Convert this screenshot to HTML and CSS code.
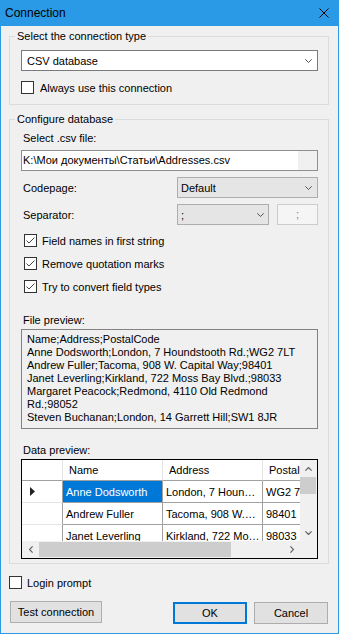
FILE: index.html
```html
<!DOCTYPE html>
<html>
<head>
<meta charset="utf-8">
<title>Connection</title>
<link rel="stylesheet" href="styles.css">
</head>
<body>
<div class="window">
  <div class="titlebar">
    <span class="title">Connection</span>
    <svg class="close" width="10" height="10" viewBox="0 0 10 10"><path d="M0.5 0.5L9.5 9.5M9.5 0.5L0.5 9.5" stroke="#000" stroke-width="1" fill="none"/></svg>
  </div>
  <div class="content">
    <fieldset class="group g1">
      <legend>Select the connection type</legend>
      <div class="gbody">
        <div class="combo combo-white">
          <span class="combo-text">CSV database</span>
          <svg class="chev" width="7" height="4" viewBox="0 0 7 4"><path d="M0.3 0.3L3.5 3.5L6.7 0.3" stroke="#555" stroke-width="1" fill="none"/></svg>
        </div>
        <div class="check check-always">
          <span class="box"></span>
          <span class="ctext">Always use this connection</span>
        </div>
      </div>
    </fieldset>

    <fieldset class="group g2">
      <legend>Configure database</legend>
      <div class="gbody">
        <div class="lbl lbl-file">Select .csv file:</div>
        <div class="path">
          <span class="path-text">K:\Мои документы\Статьи\Addresses.csv</span>
          <span class="path-side"></span>
        </div>
        <div class="frow">
          <span class="lbl">Codepage:</span>
          <div class="combo combo-gray combo-cp">
            <span class="combo-text">Default</span>
            <svg class="chev" width="7" height="4" viewBox="0 0 7 4"><path d="M0.3 0.3L3.5 3.5L6.7 0.3" stroke="#555" stroke-width="1" fill="none"/></svg>
          </div>
        </div>
        <div class="frow">
          <span class="lbl">Separator:</span>
          <div class="sep-wrap">
            <div class="combo combo-gray combo-sep">
              <span class="combo-text">;</span>
              <svg class="chev" width="7" height="4" viewBox="0 0 7 4"><path d="M0.3 0.3L3.5 3.5L6.7 0.3" stroke="#555" stroke-width="1" fill="none"/></svg>
            </div>
            <div class="sep-btn">;</div>
          </div>
        </div>
        <div class="checks">
          <div class="check">
            <span class="box"><svg width="11" height="11" viewBox="0 0 11 11"><path d="M1.5 5.5L4 8L9.5 2.5" stroke="#444" stroke-width="1" fill="none"/></svg></span>
            <span class="ctext">Field names in first string</span>
          </div>
          <div class="check">
            <span class="box"><svg width="11" height="11" viewBox="0 0 11 11"><path d="M1.5 5.5L4 8L9.5 2.5" stroke="#444" stroke-width="1" fill="none"/></svg></span>
            <span class="ctext">Remove quotation marks</span>
          </div>
          <div class="check">
            <span class="box"><svg width="11" height="11" viewBox="0 0 11 11"><path d="M1.5 5.5L4 8L9.5 2.5" stroke="#444" stroke-width="1" fill="none"/></svg></span>
            <span class="ctext">Try to convert field types</span>
          </div>
        </div>
        <div class="lbl lbl-sect lbl-fp">File preview:</div>
        <div class="preview">
          <div>Name;Address;PostalCode</div>
          <div>Anne Dodsworth;London, 7 Houndstooth Rd.;WG2 7LT</div>
          <div>Andrew Fuller;Tacoma, 908 W. Capital Way;98401</div>
          <div>Janet Leverling;Kirkland, 722 Moss Bay Blvd.;98033</div>
          <div>Margaret Peacock;Redmond, 4110 Old Redmond</div>
          <div>Rd.;98052</div>
          <div>Steven Buchanan;London, 14 Garrett Hill;SW1 8JR</div>
        </div>
        <div class="lbl lbl-sect">Data preview:</div>
        <div class="grid">
          <div class="gview">
            <div class="grow ghead">
              <div class="gc rh"></div>
              <div class="gc c1">Name</div>
              <div class="gc c2">Address</div>
              <div class="gc c3">PostalCode</div>
            </div>
            <div class="grow">
              <div class="gc rh"><svg width="5" height="9" viewBox="0 0 5 9"><path d="M0 0L5 4.5L0 9Z" fill="#222"/></svg></div>
              <div class="gc c1 sel">Anne Dodsworth</div>
              <div class="gc c2">London, 7 Houn…</div>
              <div class="gc c3">WG2 7LT</div>
            </div>
            <div class="grow">
              <div class="gc rh"></div>
              <div class="gc c1">Andrew Fuller</div>
              <div class="gc c2">Tacoma, 908 W.…</div>
              <div class="gc c3">98401</div>
            </div>
            <div class="grow">
              <div class="gc rh"></div>
              <div class="gc c1">Janet Leverling</div>
              <div class="gc c2">Kirkland, 722 Mo…</div>
              <div class="gc c3">98033</div>
            </div>
          </div>
          <div class="vscroll">
            <div class="sarrow"><svg width="7" height="4" viewBox="0 0 7 4"><path d="M0.4 3.6L3.5 0.5L6.6 3.6" stroke="#606060" stroke-width="1.2" fill="none"/></svg></div>
            <div class="vthumb"></div>
            <div class="vtrack"></div>
            <div class="sarrow"><svg width="7" height="4" viewBox="0 0 7 4"><path d="M0.4 0.4L3.5 3.5L6.6 0.4" stroke="#606060" stroke-width="1.2" fill="none"/></svg></div>
          </div>
          <div class="hscroll">
            <div class="sarrow"><svg width="4" height="7" viewBox="0 0 4 7"><path d="M3.6 0.4L0.5 3.5L3.6 6.6" stroke="#606060" stroke-width="1.2" fill="none"/></svg></div>
            <div class="hthumb"></div>
            <div class="htrack"></div>
            <div class="sarrow"><svg width="4" height="7" viewBox="0 0 4 7"><path d="M0.4 0.4L3.5 3.5L0.4 6.6" stroke="#606060" stroke-width="1.2" fill="none"/></svg></div>
          </div>
          <div class="corner"></div>
        </div>
      </div>
    </fieldset>

    <div class="check check-login">
      <span class="box"></span>
      <span class="ctext">Login prompt</span>
    </div>

    <div class="buttons">
      <div class="btn btn-test">Test connection</div>
      <div class="btn-right">
        <div class="btn btn-ok">OK</div>
        <div class="btn btn-cancel">Cancel</div>
      </div>
    </div>
  </div>
</div>
</body>
</html>
```

FILE: styles.css
```css
* { box-sizing: border-box; }
html, body { margin: 0; padding: 0; }
body {
  width: 339px;
  height: 634px;
  overflow: hidden;
  background: #f0f0f0;
  color: #000;
  font-family: "Liberation Sans", Arial, sans-serif;
  font-size: 11px;
}
.window {
  width: 339px;
  height: 634px;
  display: flex;
  flex-direction: column;
}
.titlebar {
  flex: none;
  height: 26px;
  background: #2b9ae6;
  display: flex;
  align-items: center;
  justify-content: space-between;
  padding: 0 10px 0 5px;
}
.title { font-size: 12px; line-height: 16px; }
.close { display: block; }

.content {
  flex: 1;
  border: 1px solid #2b9ae6;
  border-top: 0;
  padding: 0 9px 0 8px;
  background: #f0f0f0;
}

.group {
  margin: 0;
  padding: 0;
  min-width: 0;
  border: 1px solid #dcdcdc;
}
.group legend {
  margin-left: 5px;
  padding: 0 2px;
  line-height: 16px;
  font-size: 11px;
}
.g1 { margin-top: 2px; }
.g2 { margin-top: 6px; }
.g1 .gbody { padding: 6px 10px 10px 11px; }
.g2 .gbody { padding: 0 10px 4px 11px; }

.combo {
  height: 21px;
  display: flex;
  align-items: center;
  justify-content: space-between;
  padding: 0 5px 0 5px;
  line-height: 16px;
}
.combo-white { background: #fff; border: 1px solid #7a7a7a; }
.combo-gray { background: #e5e5e5; border: 1px solid #adadad; padding-left: 3px; }
.chev { display: block; flex: none; }

.check {
  display: flex;
  align-items: center;
  line-height: 16px;
}
.box {
  width: 13px;
  height: 13px;
  flex: none;
  border: 1px solid #333;
  background: #fff;
  display: flex;
  align-items: center;
  justify-content: center;
}
.box svg { display: block; }
.ctext { margin-left: 5px; }
.check-always { margin-top: 10px; height: 13px; }
.check-always .ctext { margin-left: 6px; }

.lbl { line-height: 16px; padding-left: 2px; }
.lbl-file { margin-top: 3px; }
.path {
  margin-top: 4px;
  height: 21px;
  border: 1px solid #8f8f8f;
  display: flex;
  background: #fff;
}
.path-text {
  flex: 1;
  padding-left: 1px;
  line-height: 19px;
  white-space: nowrap;
  overflow: hidden;
}
.path-side { width: 19px; flex: none; background: #f0f0f0; }

.frow {
  margin-top: 6px;
  display: flex;
  align-items: center;
  justify-content: space-between;
}
.combo-cp { width: 141px; }
.sep-wrap { width: 141px; display: flex; gap: 8px; }
.combo-sep { width: 92px; padding-right: 4px; }
.sep-btn {
  flex: 1;
  height: 21px;
  border: 1px solid #cccccc;
  background: #f5f5f5;
  color: #838383;
  text-align: center;
  line-height: 19px;
}

.checks { margin-top: 4px; padding-left: 3px; }
.checks .check { height: 23px; }

.lbl-sect { margin-top: 13px; }
.lbl-fp { margin-top: 14px; }
.preview {
  margin-top: 1px;
  height: 100px;
  border: 1px solid #828282;
  background: #f0f0f0;
  padding: 3px 5px 0 5px;
  line-height: 13px;
  white-space: nowrap;
  overflow: hidden;
}

.grid {
  margin-top: 1px;
  height: 100px;
  border: 1px solid #000;
  display: grid;
  grid-template-columns: 1fr 17px;
  grid-template-rows: 1fr 17px;
  background: #fff;
}
.gview { overflow: hidden; background: #fff; }
.grow { display: flex; height: 22px; }
.ghead { height: 21px; }
.gc {
  flex: none;
  width: 100px;
  height: 100%;
  border-right: 1px solid #a0a0a0;
  border-bottom: 1px solid #a0a0a0;
  padding-left: 3px;
  white-space: nowrap;
  overflow: hidden;
  display: flex;
  align-items: center;
}
.ghead .gc { border-right-color: #e5e5e5; padding-left: 6px; }
.gc.rh {
  width: 41px;
  border-bottom-color: #e5e5e5;
  padding-left: 8px;
}
.ghead .gc.rh { border-bottom-color: #a0a0a0; }
.gc.sel { background: #0078d7; color: #fff; }
.rh svg { display: block; }

.vscroll {
  background: #f0f0f0;
  display: flex;
  flex-direction: column;
}
.sarrow {
  flex: none;
  width: 17px;
  height: 17px;
  display: flex;
  align-items: center;
  justify-content: center;
}
.sarrow svg { display: block; }
.vthumb { flex: none; height: 17px; margin-right: 1px; background: #cdcdcd; }
.vtrack { flex: 1; }
.hscroll {
  background: #f0f0f0;
  display: flex;
}
.hthumb { flex: none; width: 192px; margin: 1px 0; background: #cdcdcd; }
.htrack { flex: 1; }
.corner { background: #f0f0f0; }

.check-login { margin-top: 12px; height: 13px; }

.buttons {
  margin-top: 12px;
  display: flex;
  align-items: flex-start;
  padding: 0 1px;
}
.btn {
  height: 22px;
  border: 1px solid #adadad;
  background: #e1e1e1;
  display: flex;
  align-items: center;
  justify-content: center;
  line-height: 16px;
}
.btn-test { width: 92px; }
.btn-right { margin-left: auto; margin-top: 1px; display: flex; gap: 7px; }
.btn-ok { width: 74px; border: 2px solid #0078d7; }
.btn-cancel { width: 74px; }
```
